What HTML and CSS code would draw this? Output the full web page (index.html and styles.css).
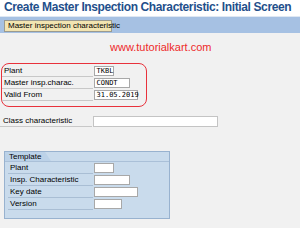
FILE: index.html
```html
<!DOCTYPE html>
<html>
<head>
<meta charset="utf-8">
<link rel="stylesheet" href="styles.css">
</head>
<body>
<div class="title">Create Master Inspection Characteristic: Initial Screen</div>
<div class="toolbar"><span class="btn">Master inspection characteristic</span></div>
<div class="content">
  <div class="watermark">www.tutorialkart.com</div>
  <div class="keygroup">
    <div class="row"><span class="label">Plant</span><span class="field w20">TKBL</span></div>
    <div class="row"><span class="label">Master insp.charac.</span><span class="field w36">CONDT</span></div>
    <div class="row"><span class="label">Valid From</span><span class="field w44">31.05.2019</span></div>
  </div>
  <div class="row classrow"><span class="label">Class characteristic</span><span class="field wide"></span></div>
  <div class="template">
    <div class="tabline"><span class="tab">Template</span></div>
    <div class="row trow"><span class="label">Plant</span><span class="field w20"></span></div>
    <div class="row trow"><span class="label">Insp. Characteristic</span><span class="field w36"></span></div>
    <div class="row trow"><span class="label">Key date</span><span class="field w44"></span></div>
    <div class="row trow"><span class="label">Version</span><span class="field w28"></span></div>
  </div>
</div>
</body>
</html>
```
FILE: styles.css
```css
* { box-sizing: border-box; }
html, body { margin: 0; padding: 0; }
body {
  width: 300px;
  height: 228px;
  overflow: hidden;
  background: #f1f1f1;
  font-family: "Liberation Sans", Arial, sans-serif;
  font-size: 8px;
  color: #000;
}
.title {
  height: 17px;
  background: #fff;
  color: #1f4f8b;
  font-weight: bold;
  font-size: 12px;
  letter-spacing: -0.38px;
  line-height: 15px;
  padding-left: 4px;
  white-space: nowrap;
  border-bottom: 1px solid #dfe8f3;
}
.toolbar {
  height: 16px;
  background: #a6c1e3;
  padding: 3px 0 0 4px;
}
.btn {
  display: inline-block;
  height: 12px;
  width: 108px;
  background: #f2e4b1;
  border: 1px solid #9a9a90;
  font-size: 8px;
  line-height: 10px;
  padding-left: 3px;
  white-space: nowrap;
}
.watermark {
  margin-top: 7px;
  height: 14px;
  padding-left: 110px;
  color: #ee2a2a;
  font-family: "Liberation Sans", Arial, sans-serif;
  font-size: 11px;
  line-height: 14px;
}
.keygroup {
  margin: 9px 0 0 1px;
  width: 146px;
  height: 44px;
  border: 1.5px solid #e8323c;
  border-radius: 8px;
  padding-top: 1px;
}
.row {
  display: flex;
  align-items: center;
  height: 12px;
}
.label {
  width: 91px;
  height: 12px;
  line-height: 11px;
  padding-left: 3px;
  border-bottom: 1px solid #c8c8c8;
  white-space: nowrap;
}
.keygroup .label { width: 90.5px; padding-left: 2px; }
.field {
  display: block;
  height: 10px;
  margin-left: 1px;
  background: #fff;
  border: 1px solid #a8a8a8;
  font-family: "DejaVu Sans Mono", monospace;
  font-size: 7px;
  line-height: 8px;
  padding-left: 2px;
}
.w20 { width: 20px; }
.w28 { width: 28px; }
.w36 { width: 36px; }
.w44 { width: 44px; }
.wide { width: 125px; border-color: #c4c4c4; height: 11px; }
.classrow { margin-top: 8px; }
.classrow .label { width: 92px; padding-left: 3px; }
.template {
  margin: 24px 0 0 4px;
  width: 166px;
  height: 68px;
  background: #c9dbec;
  border: 1px solid #98b2cf;
}
.tabline {
  height: 10px;
  border-bottom: 1px solid #aac0d8;
}
.tab {
  display: inline-block;
  position: relative;
  height: 9px;
  width: 40px;
  padding-left: 4px;
  font-size: 8px;
  line-height: 9px;
  background: #bcd2e8;
}
.tab::after {
  content: "";
  position: absolute;
  right: -6px;
  top: 0;
  width: 0;
  height: 0;
  border-bottom: 9px solid #bcd2e8;
  border-right: 6px solid transparent;
}
.trow { margin-left: 3px; }
.trow .label { width: 85px; padding-left: 2px; border-bottom-color: #a9bed4; }
.trow .field { margin-left: 1px; }
```
